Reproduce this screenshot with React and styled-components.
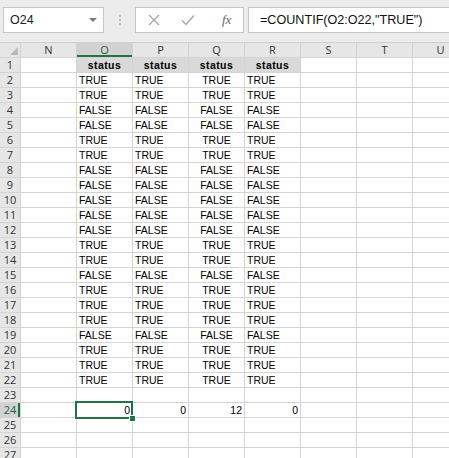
import React from "react";
import styled, { createGlobalStyle } from "styled-components";

const GlobalStyle = createGlobalStyle`
  html, body {
    margin: 0;
    padding: 0;
    background: #ffffff;
    overflow: hidden;
  }
  body {
    font-family: "Liberation Sans", Arial, sans-serif;
  }
`;

const values = [
  true, true, false, false, true, true, false, false, false, false, false,
  true, true, false, true, true, true, false, true, true, true,
];

const columns = ["N", "O", "P", "Q", "R", "S", "T", "U"];
const dataAlign = { O: "left", P: "left", Q: "center", R: "left" };
const totals = { O: "0", P: "0", Q: "12", R: "0" };

const Page = styled.div`
  width: 449px;
  height: 458px;
  overflow: hidden;
  background: #ffffff;
`;

const Toolbar = styled.div`
  height: 42px;
  box-sizing: border-box;
  padding: 7px 0 0 3px;
  background: #ececec;
  display: flex;
  align-items: flex-start;
`;

const NameBox = styled.div`
  width: 101px;
  height: 26px;
  box-sizing: border-box;
  background: #ffffff;
  border: 1px solid #c6c6c6;
  display: flex;
  align-items: center;
  justify-content: space-between;
  padding: 0 6px 0 6px;
  font-size: 12.5px;
  color: #222;
`;

const Caret = styled.span`
  width: 0;
  height: 0;
  border-left: 4px solid transparent;
  border-right: 4px solid transparent;
  border-top: 4px solid #7a7a7a;
`;

const Divider = styled.div`
  width: 31px;
  height: 26px;
  display: flex;
  flex-direction: column;
  align-items: center;
  justify-content: center;
  gap: 2px;

  span {
    width: 2px;
    height: 2px;
    background: #b8b8b8;
  }
`;

const ButtonBox = styled.div`
  width: 109px;
  height: 26px;
  box-sizing: border-box;
  background: #ffffff;
  border: 1px solid #c6c6c6;
  display: flex;
  align-items: center;
  padding: 0 0 0 12px;
  gap: 21px;
`;

const Fx = styled.span`
  font-family: "Liberation Serif", "Times New Roman", serif;
  font-style: italic;
  font-size: 13px;
  color: #6a6a6a;
  margin-left: 6px;
`;

const FormulaInput = styled.div`
  flex: 1;
  margin-left: 4px;
  height: 26px;
  box-sizing: border-box;
  background: #ffffff;
  border: 1px solid #c6c6c6;
  border-right: none;
  display: flex;
  align-items: center;
  padding-left: 11px;
  font-size: 12.6px;
  color: #111;
  white-space: nowrap;
`;

const Sheet = styled.div`
  display: grid;
  grid-template-columns: 20px repeat(8, 55px);
  grid-auto-rows: 14px;
  gap: 1px;
  background: #d4d4d4;
  border-top: 1px solid #d0d0d0;
`;

const Corner = styled.div`
  background: #e6e6e6;
  position: relative;

  &::after {
    content: "";
    position: absolute;
    right: 2px;
    bottom: 2px;
    width: 0;
    height: 0;
    border-left: 8px solid transparent;
    border-bottom: 8px solid #b9b9b9;
  }
`;

const ColHead = styled.div`
  background: ${(p) => (p.$active ? "#d2d2d2" : "#e6e6e6")};
  box-shadow: ${(p) => (p.$active ? "inset 0 -2px 0 #217346" : "none")};
  color: ${(p) => (p.$active ? "#1f5f3c" : "#333")};
  font-family: "Open Sans", "Liberation Sans", sans-serif;
  font-size: 11px;
  line-height: 14px;
  text-align: center;
`;

const RowHead = styled.div`
  background: ${(p) => (p.$active ? "#d2d2d2" : "#e6e6e6")};
  box-shadow: ${(p) => (p.$active ? "inset -2px 0 0 #217346" : "none")};
  color: ${(p) => (p.$active ? "#1f5f3c" : "#333")};
  font-family: "Open Sans", "Liberation Sans", sans-serif;
  font-size: 11px;
  line-height: 14px;
  text-align: center;
`;

const Cell = styled.div`
  position: relative;
  background: ${(p) => (p.$shade ? "#d9d9d9" : "#ffffff")};
  font-size: 10.5px;
  font-weight: ${(p) => (p.$bold ? 700 : 400)};
  letter-spacing: ${(p) => (p.$bold ? "0.4px" : "0")};
  line-height: 14px;
  color: #000;
  text-align: ${(p) => p.$align || "left"};
  padding: 0 2px;
  white-space: nowrap;
  overflow: visible;
  z-index: ${(p) => (p.$selected ? 2 : 0)};
`;

const Selection = styled.span`
  position: absolute;
  left: -2px;
  right: -1px;
  top: -2px;
  bottom: -2px;
  border: 2px solid #217346;
  pointer-events: none;

  &::after {
    content: "";
    position: absolute;
    right: -5px;
    bottom: -5px;
    width: 5px;
    height: 5px;
    background: #217346;
    border: 1px solid #ffffff;
  }
`;

const Value = styled.span`
  position: relative;
`;

function cellFor(row, col) {
  if (row === 1 && dataAlign[col]) {
    return { text: "status", bold: true, shade: true, align: "center" };
  }
  if (row >= 2 && row <= 22 && dataAlign[col]) {
    return { text: values[row - 2] ? "TRUE" : "FALSE", align: dataAlign[col] };
  }
  if (row === 24 && totals[col]) {
    return { text: totals[col], align: "right" };
  }
  return { text: "" };
}

export default function App() {
  const rows = Array.from({ length: 27 }, (_, i) => i + 1);
  return (
    <Page>
      <GlobalStyle />
      <Toolbar>
        <NameBox>
          <span>O24</span>
          <Caret />
        </NameBox>
        <Divider>
          <span />
          <span />
          <span />
        </Divider>
        <ButtonBox>
          <svg width="12" height="12" viewBox="0 0 12 12">
            <path d="M1 1 L11 11 M11 1 L1 11" stroke="#a8a8a8" strokeWidth="1.3" fill="none" />
          </svg>
          <svg width="14" height="12" viewBox="0 0 14 12">
            <path d="M1 6.5 L5 10.5 L13 1.5" stroke="#a8a8a8" strokeWidth="1.5" fill="none" />
          </svg>
          <Fx>fx</Fx>
        </ButtonBox>
        <FormulaInput>=COUNTIF(O2:O22,"TRUE")</FormulaInput>
      </Toolbar>
      <Sheet>
        <Corner />
        {columns.map((c) => (
          <ColHead key={c} $active={c === "O"}>
            {c}
          </ColHead>
        ))}
        {rows.map((r) => (
          <React.Fragment key={r}>
            <RowHead $active={r === 24}>{r}</RowHead>
            {columns.map((c) => {
              const cell = cellFor(r, c);
              const selected = r === 24 && c === "O";
              return (
                <Cell
                  key={c}
                  $align={cell.align}
                  $bold={cell.bold}
                  $shade={cell.shade}
                  $selected={selected}
                >
                  {selected && <Selection />}
                  <Value>{cell.text}</Value>
                </Cell>
              );
            })}
          </React.Fragment>
        ))}
      </Sheet>
    </Page>
  );
}
